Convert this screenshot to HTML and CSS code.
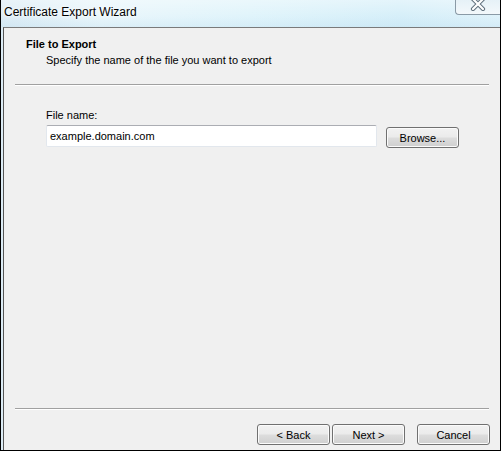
FILE: index.html
```html
<!DOCTYPE html>
<html>
<head>
<meta charset="utf-8">
<link rel="stylesheet" href="styles.css">
</head>
<body>
<div class="window">
  <div class="titlebar">
    <span class="title">Certificate Export Wizard</span>
    <div class="close">
      <svg width="18" height="11" viewBox="0 0 18 11">
        <path d="M4 -1 L14 9 M14 -1 L4 9" stroke="#5f6f7c" stroke-width="4.2" stroke-linecap="round"/>
        <path d="M4 -1 L14 9 M14 -1 L4 9" stroke="#ffffff" stroke-width="2.2" stroke-linecap="round"/>
      </svg>
    </div>
  </div>
  <div class="frame">
    <div class="panel">
      <div class="header">
        <div class="h-title">File to Export</div>
        <div class="h-sub">Specify the name of the file you want to export</div>
      </div>
      <div class="sep"></div>
      <div class="body">
        <label class="lbl">File name:</label>
        <div class="row">
          <div class="input">example.domain.com</div>
          <button class="btn browse">Browse...</button>
        </div>
      </div>
      <div class="sep"></div>
      <div class="footer">
        <button class="btn">&lt; Back</button>
        <button class="btn next">Next &gt;</button>
        <button class="btn cancel">Cancel</button>
      </div>
    </div>
  </div>
</div>
</body>
</html>
```

FILE: styles.css
```css
html, body {
  margin: 0;
  padding: 0;
  background: #000;
}
body {
  width: 501px;
  height: 451px;
  overflow: hidden;
  font-family: "Liberation Sans", Arial, sans-serif;
  font-size: 11px;
  color: #000;
}
.window {
  box-sizing: border-box;
  width: 501px;
  height: 451px;
  border-left: 1px solid #000;
  border-right: 1px solid #000;
  border-bottom: 1px solid #000;
  background: linear-gradient(90deg, #dcecf5 0%, #e9f6fb 20%, #e0f4fb 50%, #d6eff9 80%, #dff2fa 100%);
  display: flex;
  flex-direction: column;
}
.titlebar {
  height: 27px;
  display: flex;
  justify-content: space-between;
  align-items: flex-start;
  background: linear-gradient(180deg, rgba(255,255,255,0.35) 0%, rgba(255,255,255,0) 60%, rgba(180,215,235,0.25) 100%);
}
.title {
  margin-left: 3px;
  margin-top: 5px;
  font-size: 12px;
  line-height: 14px;
  color: #000;
  text-shadow: 0 0 6px #fff, 0 0 3px #fff;
}
.close {
  width: 44px;
  height: 14px;
  border-left: 1px solid #8a9aa6;
  border-bottom: 1px solid #8a9aa6;
  border-bottom-left-radius: 4px;
  background: linear-gradient(180deg, #e6f1f7 0%, #f3f8fb 100%);
  display: flex;
  justify-content: center;
  align-items: flex-start;
}
.close svg { display: block; }
.frame {
  flex: 1;
  display: flex;
  padding-left: 2px;
  min-height: 0;
}
.panel {
  flex: 1;
  background: #f0f0f0;
  border-top: 1px solid #7a7a7a;
  border-left: 1px solid #555;
  display: flex;
  flex-direction: column;
}
.header {
  padding-top: 8px;
  box-sizing: border-box;
  height: 56px;
}
.h-title {
  font-weight: bold;
  line-height: 16px;
  padding-left: 22px;
}
.h-sub {
  line-height: 16px;
  padding-left: 42px;
}
.sep {
  height: 1px;
  background: #a0a0a0;
  border-bottom: 1px solid #ffffff;
  margin: 0 11px 0 11px;
}
.body {
  flex: 1;
  padding-left: 42px;
  padding-top: 21px;
}
.lbl {
  display: block;
  line-height: 16px;
  margin-bottom: 2px;
}
.row {
  display: flex;
  align-items: flex-start;
}
.input {
  box-sizing: border-box;
  width: 331px;
  height: 22px;
  background: #fff;
  border: 1px solid #e2e7ed;
  border-top-color: #abadb3;
  border-radius: 2px;
  padding-left: 3px;
  line-height: 20px;
}
.btn {
  box-sizing: border-box;
  width: 73px;
  height: 21px;
  margin: 0;
  padding: 0;
  font-family: "Liberation Sans", Arial, sans-serif;
  font-size: 11px;
  color: #000;
  border: 1px solid #707070;
  border-radius: 3px;
  background: linear-gradient(180deg, #f2f2f2 0%, #ebebeb 48%, #dddddd 52%, #cfcfcf 100%);
  box-shadow: inset 0 0 0 1px #fbfbfb;
}
.browse {
  margin-left: 9px;
  margin-top: 2px;
}
.footer {
  height: 40px;
  display: flex;
  justify-content: flex-end;
  align-items: flex-start;
  padding-top: 14px;
  padding-right: 10px;
  box-sizing: border-box;
}
.next { margin-left: 2px; }
.cancel { margin-left: 12px; }
```
